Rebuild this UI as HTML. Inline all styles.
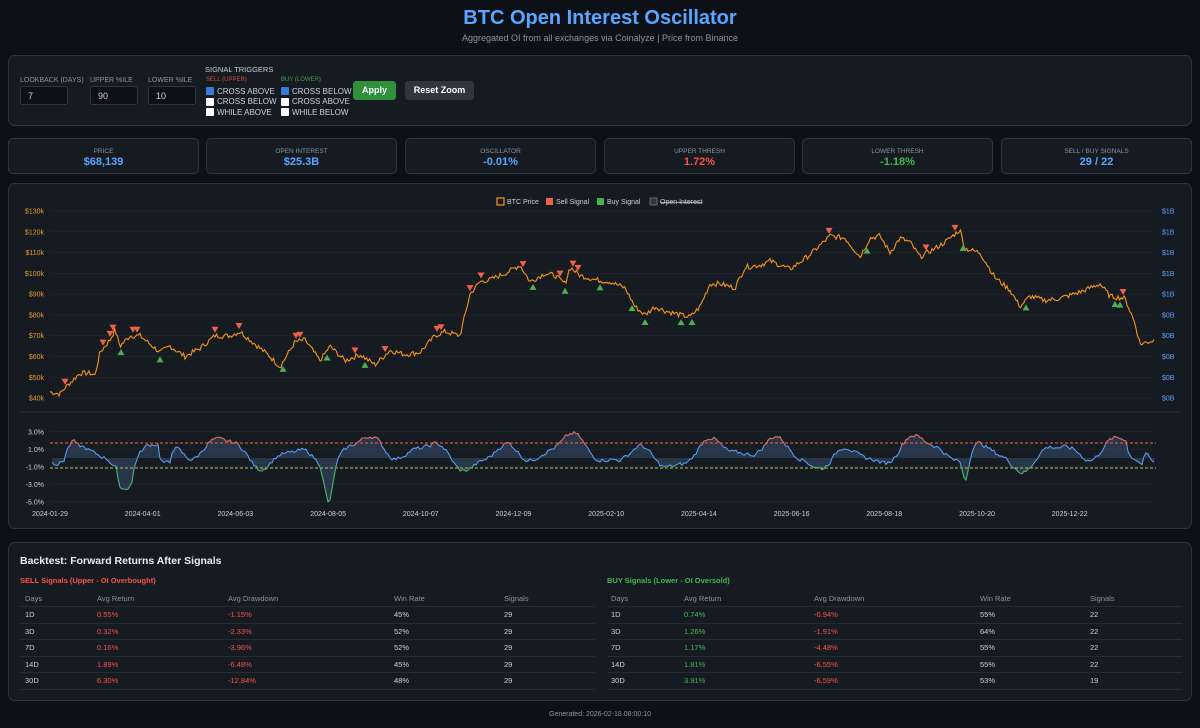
<!DOCTYPE html>
<html><head><meta charset="utf-8"><style>
*{box-sizing:border-box;margin:0;padding:0}
body{width:1200px;height:728px;background:#0d1117;font-family:"Liberation Sans",sans-serif;color:#c9d1d9;position:relative;overflow:hidden}
.abs{position:absolute}
.panel{position:absolute;background:#161b22;border:1px solid #30363d;border-radius:7px}
h1{position:absolute;top:7px;width:100%;text-align:center;font-size:20px;color:#58a6ff;font-weight:bold}
.sub{top:33px;width:100%;text-align:center;font-size:9px;color:#8b949e}
.lbl{font-size:7px;color:#8b949e;text-transform:uppercase}
.inp{position:absolute;width:48px;height:19px;background:#0d1117;border:1px solid #30363d;border-radius:3px;font-size:9px;color:#c9d1d9;padding:4px 7px}
.cb{font-size:8px;color:#c9d1d9;display:flex;align-items:center;height:10.5px}
.cb i{display:inline-block;width:8px;height:8px;background:#fff;border-radius:1px;margin-right:3px}
.cb i.on{background:#3a7bd5}
.stat{position:absolute;top:138px;height:36px;width:191px;background:#161b22;border:1px solid #30363d;border-radius:5px;text-align:center}
.stat .l{font-size:6.5px;color:#8b949e;margin-top:9px}
.stat .v{font-size:11px;font-weight:bold;margin-top:1px}
table{position:absolute;border-collapse:collapse;font-size:7.5px;table-layout:fixed}
td{height:16.5px;border-bottom:1px solid #262c34;color:#c9d1d9}
tr.h td{color:#8b949e}
.r{color:#f85149}.g{color:#3fb950}
</style></head><body>
<h1>BTC Open Interest Oscillator</h1>
<div class="abs sub">Aggregated OI from all exchanges via Coinalyze | Price from Binance</div>

<div class="panel" style="left:8px;top:55px;width:1184px;height:71px"></div>
<div class="abs lbl" style="left:20px;top:77px">Lookback (Days)</div>
<div class="inp" style="left:20px;top:86px">7</div>
<div class="abs lbl" style="left:90px;top:77px">Upper %ile</div>
<div class="inp" style="left:90px;top:86px">90</div>
<div class="abs lbl" style="left:148px;top:77px">Lower %ile</div>
<div class="inp" style="left:148px;top:86px">10</div>
<div class="abs" style="left:205px;top:65px;font-size:7.5px;color:#c9d1d9">SIGNAL TRIGGERS</div>
<div class="abs lbl" style="left:206px;top:77px;color:#d4533f;font-size:6px">Sell (Upper)</div>
<div class="abs lbl" style="left:281px;top:77px;color:#3fa04a;font-size:6px">Buy (Lower)</div>
<div class="abs" style="left:206px;top:86px"><div class="cb"><i class="on"></i>CROSS ABOVE</div><div class="cb"><i></i>CROSS BELOW</div><div class="cb"><i></i>WHILE ABOVE</div></div>
<div class="abs" style="left:281px;top:86px"><div class="cb"><i class="on"></i>CROSS BELOW</div><div class="cb"><i></i>CROSS ABOVE</div><div class="cb"><i></i>WHILE BELOW</div></div>
<div class="abs" style="left:353px;top:81px;width:43px;height:19px;background:#2f8f3a;border-radius:3px;color:#fff;font-size:9px;font-weight:bold;text-align:center;line-height:19px">Apply</div>
<div class="abs" style="left:405px;top:81px;width:69px;height:19px;background:#30363d;border-radius:3px;color:#fff;font-size:9px;font-weight:bold;text-align:center;line-height:19px">Reset Zoom</div>

<div class="stat" style="left:8px"><div class="l">PRICE</div><div class="v" style="color:#58a6ff">$68,139</div></div>
<div class="stat" style="left:206px"><div class="l">OPEN INTEREST</div><div class="v" style="color:#58a6ff">$25.3B</div></div>
<div class="stat" style="left:405px"><div class="l">OSCILLATOR</div><div class="v" style="color:#58a6ff">-0.01%</div></div>
<div class="stat" style="left:604px"><div class="l">UPPER THRESH</div><div class="v" style="color:#f85149">1.72%</div></div>
<div class="stat" style="left:802px"><div class="l">LOWER THRESH</div><div class="v" style="color:#3fb950">-1.18%</div></div>
<div class="stat" style="left:1001px"><div class="l">SELL / BUY SIGNALS</div><div class="v" style="color:#58a6ff">29 / 22</div></div>

<div class="panel" style="left:8px;top:183px;width:1184px;height:346px"></div>
<svg class="abs" style="left:0;top:0" width="1200" height="540" id="ch" font-family="Liberation Sans" >
<g font-size="7" fill="#c9d1d9">
<rect x="497" y="198" width="7" height="7" fill="none" stroke="#f7931a" stroke-width="1.2"/><text x="507" y="204">BTC Price</text>
<rect x="546" y="198" width="7" height="7" fill="#f0614a"/><text x="556" y="204">Sell Signal</text>
<rect x="597" y="198" width="7" height="7" fill="#4caf50"/><text x="607" y="204">Buy Signal</text>
<rect x="650" y="198" width="7" height="7" fill="#30363d" stroke="#8b949e" stroke-width=".6"/><text x="660" y="204" text-decoration="line-through">Open Interest</text>
</g>
<g id="grid" stroke="#21262d" stroke-width="0.7"></g>
<g id="ylab" font-size="7" fill="#e39a2c" text-anchor="end"></g>
<g id="rlab" font-size="7" fill="#58a6ff"></g>
<line x1="20" x2="1180" y1="412" y2="412" stroke="#2a3038"/>
<g id="olab" font-size="7" fill="#c9d1d9" text-anchor="end"></g>
<g id="xlab" font-size="7" fill="#c9d1d9" text-anchor="middle"></g>
<path id="ofill" fill="#5b7fb5" fill-opacity="0.28"/>
<line x1="50" x2="1156" y1="443" y2="443" stroke="#f0614a" stroke-dasharray="3,2" stroke-width="1"/>
<line x1="50" x2="1156" y1="468" y2="468" stroke="#b5c46a" stroke-dasharray="3,2" stroke-width="1"/>
<defs><clipPath id="cu"><rect x="0" y="0" width="1200" height="445"/></clipPath><clipPath id="cl"><rect x="0" y="466" width="1200" height="60"/></clipPath></defs>
<path id="oline" fill="none" stroke="#58a6ff" stroke-width="1"/>
<path id="ored" fill="none" stroke="#f0614a" stroke-width="1" clip-path="url(#cu)"/>
<path id="ogrn" fill="none" stroke="#4caf50" stroke-width="1" clip-path="url(#cl)"/>
<path id="price" fill="none" stroke="#f7931a" stroke-width="1.1"/>
<g id="mk"></g>
</svg>

<div class="panel" style="left:8px;top:542px;width:1184px;height:159px"></div>
<div class="abs" style="left:20px;top:555px;font-size:10.5px;font-weight:bold;color:#e6edf3">Backtest: Forward Returns After Signals</div>
<div class="abs" style="left:20px;top:576px;font-size:7.5px;font-weight:bold;color:#f85149">SELL Signals (Upper - OI Overbought)</div>
<div class="abs" style="left:607px;top:576px;font-size:7.5px;font-weight:bold;color:#3fb950">BUY Signals (Lower - OI Oversold)</div>
<table style="left:20px;top:590px;width:575px">
<tr class="h"><td style="width:77px;padding-left:5px">Days</td><td style="width:131px">Avg Return</td><td style="width:166px">Avg Drawdown</td><td style="width:110px">Win Rate</td><td>Signals</td></tr>
<tr><td style="padding-left:5px">1D</td><td class="r">0.55%</td><td class="r">-1.15%</td><td>45%</td><td>29</td></tr>
<tr><td style="padding-left:5px">3D</td><td class="r">0.32%</td><td class="r">-2.33%</td><td>52%</td><td>29</td></tr>
<tr><td style="padding-left:5px">7D</td><td class="r">0.16%</td><td class="r">-3.96%</td><td>52%</td><td>29</td></tr>
<tr><td style="padding-left:5px">14D</td><td class="r">1.89%</td><td class="r">-6.48%</td><td>45%</td><td>29</td></tr>
<tr><td style="padding-left:5px">30D</td><td class="r">6.30%</td><td class="r">-12.84%</td><td>48%</td><td>29</td></tr>
</table>
<table style="left:607px;top:590px;width:575px">
<tr class="h"><td style="width:77px;padding-left:4px">Days</td><td style="width:130px">Avg Return</td><td style="width:166px">Avg Drawdown</td><td style="width:110px">Win Rate</td><td>Signals</td></tr>
<tr><td style="padding-left:4px">1D</td><td class="g">0.74%</td><td class="r">-0.94%</td><td>55%</td><td>22</td></tr>
<tr><td style="padding-left:4px">3D</td><td class="g">1.26%</td><td class="r">-1.91%</td><td>64%</td><td>22</td></tr>
<tr><td style="padding-left:4px">7D</td><td class="g">1.17%</td><td class="r">-4.48%</td><td>55%</td><td>22</td></tr>
<tr><td style="padding-left:4px">14D</td><td class="g">1.81%</td><td class="r">-6.55%</td><td>55%</td><td>22</td></tr>
<tr><td style="padding-left:4px">30D</td><td class="g">3.91%</td><td class="r">-6.59%</td><td>53%</td><td>19</td></tr>
</table>
<div class="abs" style="top:711px;width:100%;text-align:center;font-size:7px;color:#8b949e">Generated: 2026-02-18 08:00:10</div>

<script>
var NS="http://www.w3.org/2000/svg";
function el(t,a,p,txt){var e=document.createElementNS(NS,t);for(var k in a)e.setAttribute(k,a[k]);if(txt)e.textContent=txt;document.getElementById(p).appendChild(e);return e;}
function Y(p){return 481.2-2.078*p;}
for(var i=0;i<10;i++){var p=130-i*10,y=Y(p);el('line',{x1:50,x2:1156,y1:y,y2:y},'grid');el('text',{x:44,y:y+2.5},'ylab','$'+p+'k');el('text',{x:1162,y:y+2.5},'rlab','$'+(i<5?1:0)+'B');}
var ol=[3,1,-1,-3,-5];ol.forEach(function(v){var y=458-v*8.75;el('line',{x1:50,x2:1156,y1:y,y2:y},'grid');el('text',{x:44,y:y+2.5},'olab',v.toFixed(1)+'%');});
var xl=['2024-01-29','2024-04-01','2024-06-03','2024-08-05','2024-10-07','2024-12-09','2025-02-10','2025-04-14','2025-06-16','2025-08-18','2025-10-20','2025-12-22'];
xl.forEach(function(s,i){el('text',{x:50+i*92.7,y:516},'xlab',s);});
var K=[[50,43],[60,42],[65,45],[80,52],[90,52],[95,51],[100,62],[110,68],[115,73],[120,65],[130,70],[140,70],[150,66],[160,62],[170,65],[185,60],[200,64],[215,70],[230,70],[240,72],[255,66],[270,60],[280,55],[295,67],[305,68],[320,58],[330,65],[345,58],[360,61],[375,56],[390,63],[405,61],[420,62],[435,70],[445,72],[460,70],[470,90],[480,96],[490,97],[505,100],[520,104],[530,96],[545,100],[555,99],[565,95],[570,103],[580,99],[595,97],[610,96],[625,93],[635,84],[645,80],[655,84],[665,82],[680,80],[690,79],[700,84],[710,95],[720,95],[735,93],[745,103],[760,104],[770,106],[790,102],[810,109],[830,118],[845,117],[860,108],[870,117],[880,118],[890,110],[900,117],[910,115],[920,108],[935,112],[945,115],[960,121],[965,112],[980,110],[995,98],[1010,92],[1020,84],[1030,89],[1045,87],[1060,88],[1080,91],[1100,95],[1110,89],[1125,88],[1135,76],[1140,66],[1148,67],[1155,68]];
var seed=7;function rnd(){seed=(seed*9301+49297)%233280;return seed/233280;}
var d='',j=0;
for(var x=50;x<=1155;x+=1.5){while(j<K.length-2&&K[j+1][0]<x)j++;var a=K[j],b=K[j+1],t=Math.min(1,Math.max(0,(x-a[0])/(b[0]-a[0])));var p=a[1]+(b[1]-a[1])*t+(rnd()-0.5)*2.5;d+=(d?'L':'M')+x.toFixed(1)+','+Y(p).toFixed(1);}
document.getElementById('price').setAttribute('d',d);
var od='',fd='M52,458';var prev=0;
for(var x=52;x<=1155;x+=2){var s=0.6+Math.sin(x/11)*1.2+Math.sin(x/29+1)*0.8+Math.sin(x/5.3)*0.35+(rnd()-0.5)*0.7;if(Math.abs(x-328)<8)s-=(8-Math.abs(x-328))*0.6;if(Math.abs(x-965)<6)s-=(6-Math.abs(x-965))*0.6;if(Math.abs(x-125)<8)s-=2;if(Math.abs(x-165)<7)s-=2.2;if(Math.abs(x-70)<6)s+=1;if(Math.abs(x-1135)<8)s-=2;s=prev*0.35+s*0.65;prev=s;s=Math.max(-5,Math.min(3.3,s));var y=458-s*8.75;od+=(od?'L':'M')+x.toFixed(1)+','+y.toFixed(1);fd+='L'+x.toFixed(1)+','+y.toFixed(1);}
fd+='L1155,458Z';
document.getElementById('oline').setAttribute('d',od);document.getElementById('ored').setAttribute('d',od);document.getElementById('ogrn').setAttribute('d',od);document.getElementById('ofill').setAttribute('d',fd);
function val(x){var j=0;while(j<K.length-2&&K[j+1][0]<x)j++;var a=K[j],b=K[j+1];return a[1]+(b[1]-a[1])*(x-a[0])/(b[0]-a[0]);}
var sells=[65,103,110,113,133,137,215,239,296,300,355,385,437,441,470,481,523,560,573,578,829,926,955,1123];
sells.forEach(function(x){var y=Y(val(x))-6;el('path',{d:'M'+(x-3.5)+','+(y-3)+'L'+(x+3.5)+','+(y-3)+'L'+x+','+(y+3)+'Z',fill:'#f0614a'},'mk');});
var buys=[121,160,283,327,365,533,565,600,632,645,681,692,867,963,1026,1115,1120];
buys.forEach(function(x){var y=Y(val(x))+7;el('path',{d:'M'+(x-3.5)+','+(y+3)+'L'+(x+3.5)+','+(y+3)+'L'+x+','+(y-3)+'Z',fill:'#4caf50'},'mk');});
</script>
</body></html>
